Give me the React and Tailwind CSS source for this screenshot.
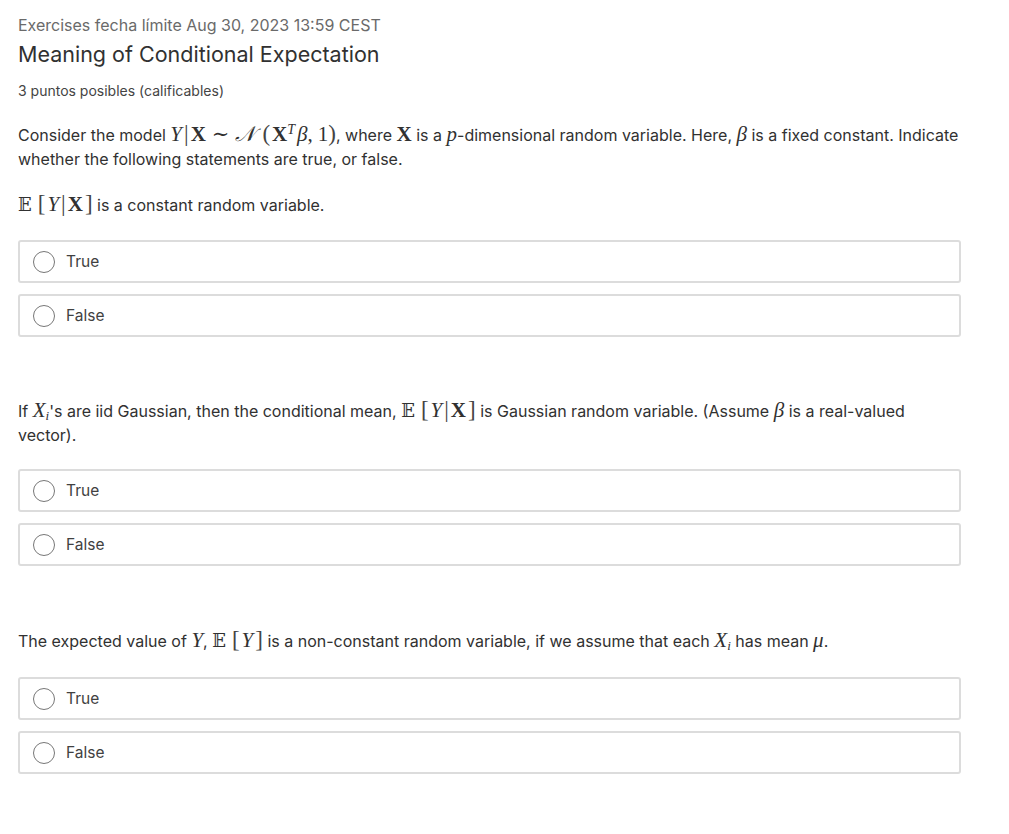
import React from 'react';

const M = ({ children, className = '' }) => (
  <span className={`font-['Liberation_Serif','DejaVu_Serif',serif] text-[21px] leading-none ${className}`}>{children}</span>
);
const I = ({ children, className = '' }) => <M className={`italic ${className}`}>{children}</M>;
const B = ({ children, className = '' }) => <M className={`font-bold ${className}`}>{children}</M>;
const EE = () => <span className="font-['DejaVu_Serif',serif] text-[18px] leading-none">𝔼</span>;
const Br = ({ children, className = '' }) => (
  <span className={`font-['Liberation_Serif','DejaVu_Serif',serif] text-[23px] leading-none text-[#444] ${className}`}>{children}</span>
);

const EYX = () => (
  <>
    <EE />
    <Br className="ml-[6px] mr-[2px]">[</Br>
    <I>Y</I>
    <Br className="mx-[2px]">|</Br>
    <B>X</B>
    <Br className="ml-[2px]">]</Br>
  </>
);

function Option({ label }) {
  return (
    <label className="flex h-[43px] items-center rounded-[3px] border-2 border-[#dcdcdc] bg-white pl-[13px]">
      <span className="h-[22px] w-[22px] rounded-full border border-[#777] bg-white" />
      <span className="ml-[11px] text-[15.5px] text-[#414141]">{label}</span>
    </label>
  );
}

function Options() {
  return (
    <div className="flex flex-col gap-[11px]">
      <Option label="True" />
      <Option label="False" />
    </div>
  );
}

export default function App() {
  return (
    <div className="min-h-[834px] w-[1009px] bg-white px-[18px] pt-[14px] font-['Inter','Noto_Sans',sans-serif] text-[#313131]">
      <div className="w-[943px]">
        <div className="text-[16px] leading-[22px] text-[#6a6a6a]">Exercises fecha límite Aug 30, 2023 13:59 CEST</div>
        <h2 className="mt-[3px] text-[21.5px] leading-[30px] text-[#313131]">Meaning of Conditional Expectation</h2>
        <div className="mt-[13px] text-[14px] leading-[18px] text-[#444]">3 puntos posibles (calificables)</div>

        <p className="mt-[22px] text-[16px] leading-[24px]">
          Consider the model <I>Y</I><Br className="mx-[2px]">|</Br><B>X</B><M className="mx-[6px]">∼</M><I>𝒩</I><Br className="ml-[7px] mr-[2px]">(</Br><B>X</B><sup className="font-['Liberation_Serif',serif] text-[14px] italic">T</sup><I className="ml-[2px]">β</I><M>,</M><M className="ml-[5px]">1</M><Br>)</Br>, where <B>X</B> is a <I>p</I>-dimensional random variable. Here, <I>β</I> is a fixed constant. Indicate whether the following statements are true, or false.
        </p>
        <p className="mt-[21px] text-[16px] leading-[24px]">
          <EYX /> is a constant random variable.
        </p>
        <div className="mt-[23px]">
          <Options />
        </div>

        <p className="mt-[61px] text-[16px] leading-[24px]">
          If <I>X</I><sub className="font-['Liberation_Serif',serif] text-[13px] italic">i</sub>'s are iid Gaussian, then the conditional mean, <EYX /> is Gaussian random variable. (Assume <I>β</I> is a real-valued vector).
        </p>
        <div className="mt-[22px]">
          <Options />
        </div>

        <p className="mt-[62px] text-[16px] leading-[24px]">
          The expected value of <I>Y</I>, <EE /><Br className="ml-[6px] mr-[2px]">[</Br><I>Y</I><Br className="ml-[2px]">]</Br> is a non-constant random variable, if we assume that each <I>X</I><sub className="font-['Liberation_Serif',serif] text-[13px] italic">i</sub> has mean <I>μ</I>.
        </p>
        <div className="mt-[24px]">
          <Options />
        </div>
      </div>
    </div>
  );
}
